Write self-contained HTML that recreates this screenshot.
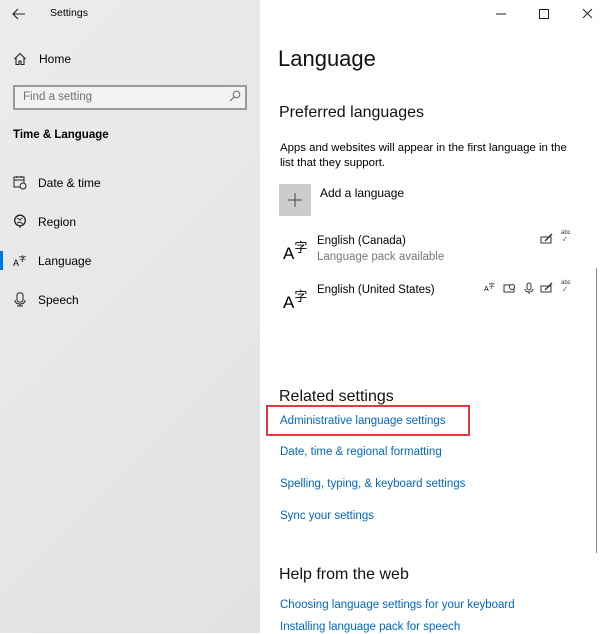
<!DOCTYPE html>
<html><head><meta charset="utf-8"><style>
*{margin:0;padding:0;box-sizing:border-box}
body{width:600px;height:633px;overflow:hidden;font-family:"Liberation Sans","Noto Sans CJK SC",sans-serif;background:#fff;position:relative;color:#000}
.side{position:absolute;left:0;top:0;width:260px;height:633px;background:linear-gradient(135deg,#ececec,#e2e2e2)}
.a{position:absolute;white-space:nowrap}
.t{font-size:12px;line-height:14px}
.lk{color:#0067c0;font-size:11.5px;line-height:14px}
svg{position:absolute}
</style></head><body>
<div class="side"></div>
<svg style="left:12px;top:8px" width="14" height="12" viewBox="0 0 14 12"><path d="M6 1L1 6l5 5M1 6h12" stroke="#222" fill="none" stroke-width="1.1"/></svg>
<div class="a" style="left:50px;top:7px;font-size:10.5px;line-height:13px">Settings</div>
<svg style="left:13px;top:52px" width="14" height="14" viewBox="0 0 14 14"><path d="M1.5 7L7 1.5 12.5 7M3 5.5V12.5h3V9h2v3.5h3V5.5" stroke="#222" fill="none" stroke-width="1.1"/></svg>
<div class="a t" style="left:39px;top:52px">Home</div>
<div class="a" style="left:13px;top:85px;width:234px;height:25px;border:2px solid #999;background:#f2f2f2"></div>
<div class="a" style="left:23px;top:90px;font-size:11.5px;line-height:14px;color:#707070">Find a setting</div>
<svg style="left:229px;top:90px" width="12" height="12" viewBox="0 0 12 12"><circle cx="7.5" cy="4.5" r="3.3" stroke="#666" fill="none"/><path d="M5 7L1 11" stroke="#666"/></svg>
<div class="a" style="left:13px;top:128px;font-size:11.5px;line-height:14px;font-weight:bold">Time &amp; Language</div>
<svg style="left:13px;top:175px" width="14" height="15" viewBox="0 0 14 15"><rect x="1" y="2" width="10" height="10" stroke="#222" fill="none"/><path d="M1 5h10M4 1v2M8 1v2" stroke="#222"/><circle cx="10" cy="11" r="3" fill="#e8e8e8" stroke="#222"/></svg>
<div class="a t" style="left:38px;top:176px">Date &amp; time</div>
<svg style="left:13px;top:214px" width="14" height="15" viewBox="0 0 14 15"><circle cx="7" cy="6.5" r="5.3" stroke="#222" fill="none" stroke-width="1.3"/><path d="M4 4l3 2 2-2M4 9l3-1 3 2M7 12v2" stroke="#222" fill="none"/></svg>
<div class="a t" style="left:38px;top:215px">Region</div>
<div class="a" style="left:0;top:251px;width:3px;height:19px;background:#0078d7"></div>
<div class="a" style="left:13px;top:254px;font-size:9px;line-height:11px">A<span style="font-size:7px;vertical-align:5px">字</span></div>
<div class="a t" style="left:38px;top:254px">Language</div>
<svg style="left:14px;top:292px" width="12" height="15" viewBox="0 0 12 15"><rect x="3" y="1" width="6" height="9" rx="2" stroke="#222" fill="none"/><path d="M1 8c0 3 2 4 5 4s5-1 5-4M6 12v2M3 14h6" stroke="#222" fill="none"/></svg>
<div class="a t" style="left:38px;top:293px">Speech</div>

<svg style="left:496px;top:8px" width="100" height="12" viewBox="0 0 100 12"><path d="M0 6h10" stroke="#222"/><rect x="43.5" y="1.5" width="9" height="9" stroke="#222" fill="none"/><path d="M87 1l9 9M96 1l-9 9" stroke="#222"/></svg>

<div class="a" style="left:278px;top:45px;font-size:22px;line-height:27px;color:#111">Language</div>
<div class="a" style="left:279px;top:102px;font-size:16px;line-height:21px;color:#111">Preferred languages</div>
<div class="a" style="left:280px;top:141px;font-size:11.4px;line-height:15px">Apps and websites will appear in the first language in the<br>list that they support.</div>
<div class="a" style="left:279px;top:184px;width:32px;height:32px;background:#cccccc"></div>
<svg style="left:288px;top:193px" width="14" height="14" viewBox="0 0 14 14"><path d="M7 0v14M0 7h14" stroke="#444"/></svg>
<div class="a t" style="left:320px;top:186px">Add a language</div>
<div class="a" style="left:283px;top:238px;font-size:17px;line-height:20px">A<span style="font-size:13px;vertical-align:7px">字</span></div>
<div class="a t" style="left:317px;top:234px;font-size:11.5px">English (Canada)</div>
<div class="a t" style="left:317px;top:250px;font-size:11.5px;color:#777">Language pack available</div>
<div class="a" style="left:283px;top:287px;font-size:17px;line-height:20px">A<span style="font-size:13px;vertical-align:7px">字</span></div>
<div class="a t" style="left:317px;top:283px;font-size:11.5px">English (United States)</div>
<div class="a" style="left:484px;top:283px;font-size:7px;line-height:9px">A<span style="font-size:6px;vertical-align:3px">字</span></div>
<svg style="left:503px;top:283px" width="14" height="12" viewBox="0 0 14 12"><rect x="1" y="2" width="10" height="7" stroke="#333" fill="none"/><circle cx="9" cy="4" r="2.5" fill="#fff" stroke="#333"/></svg>
<svg style="left:524px;top:282px" width="10" height="13" viewBox="0 0 10 13"><rect x="3" y="1" width="4" height="7" rx="2" stroke="#333" fill="none"/><path d="M1 7c0 2 2 3 4 3s4-1 4-3M5 10v2" stroke="#333" fill="none"/></svg>
<svg style="left:540px;top:233px" width="14" height="12" viewBox="0 0 14 12"><rect x="1" y="4" width="10" height="6" stroke="#333" fill="none"/><path d="M5 8l7-7" stroke="#333" stroke-width="1.4"/></svg>
<svg style="left:540px;top:282px" width="14" height="12" viewBox="0 0 14 12"><rect x="1" y="4" width="10" height="6" stroke="#333" fill="none"/><path d="M5 8l7-7" stroke="#333" stroke-width="1.4"/></svg>
<div class="a" style="left:561px;top:230px;font-size:6px;line-height:7px;color:#333">abc<br>&nbsp;✓</div>
<div class="a" style="left:561px;top:280px;font-size:6px;line-height:7px;color:#333">abc<br>&nbsp;✓</div>
<div class="a" style="left:596px;top:268px;width:1px;height:285px;background:#888"></div>

<div class="a" style="left:279px;top:386px;font-size:16px;line-height:21px;color:#111">Related settings</div>
<div class="a" style="left:266px;top:405px;width:204px;height:31px;border:2px solid #e8383d"></div>
<div class="a lk" style="left:280px;top:414px">Administrative language settings</div>
<div class="a lk" style="left:280px;top:445px">Date, time &amp; regional formatting</div>
<div class="a lk" style="left:280px;top:477px">Spelling, typing, &amp; keyboard settings</div>
<div class="a lk" style="left:280px;top:509px">Sync your settings</div>
<div class="a" style="left:279px;top:564px;font-size:16px;line-height:21px;color:#111">Help from the web</div>
<div class="a lk" style="left:280px;top:598px">Choosing language settings for your keyboard</div>
<div class="a lk" style="left:280px;top:620px">Installing language pack for speech</div>
</body></html>
